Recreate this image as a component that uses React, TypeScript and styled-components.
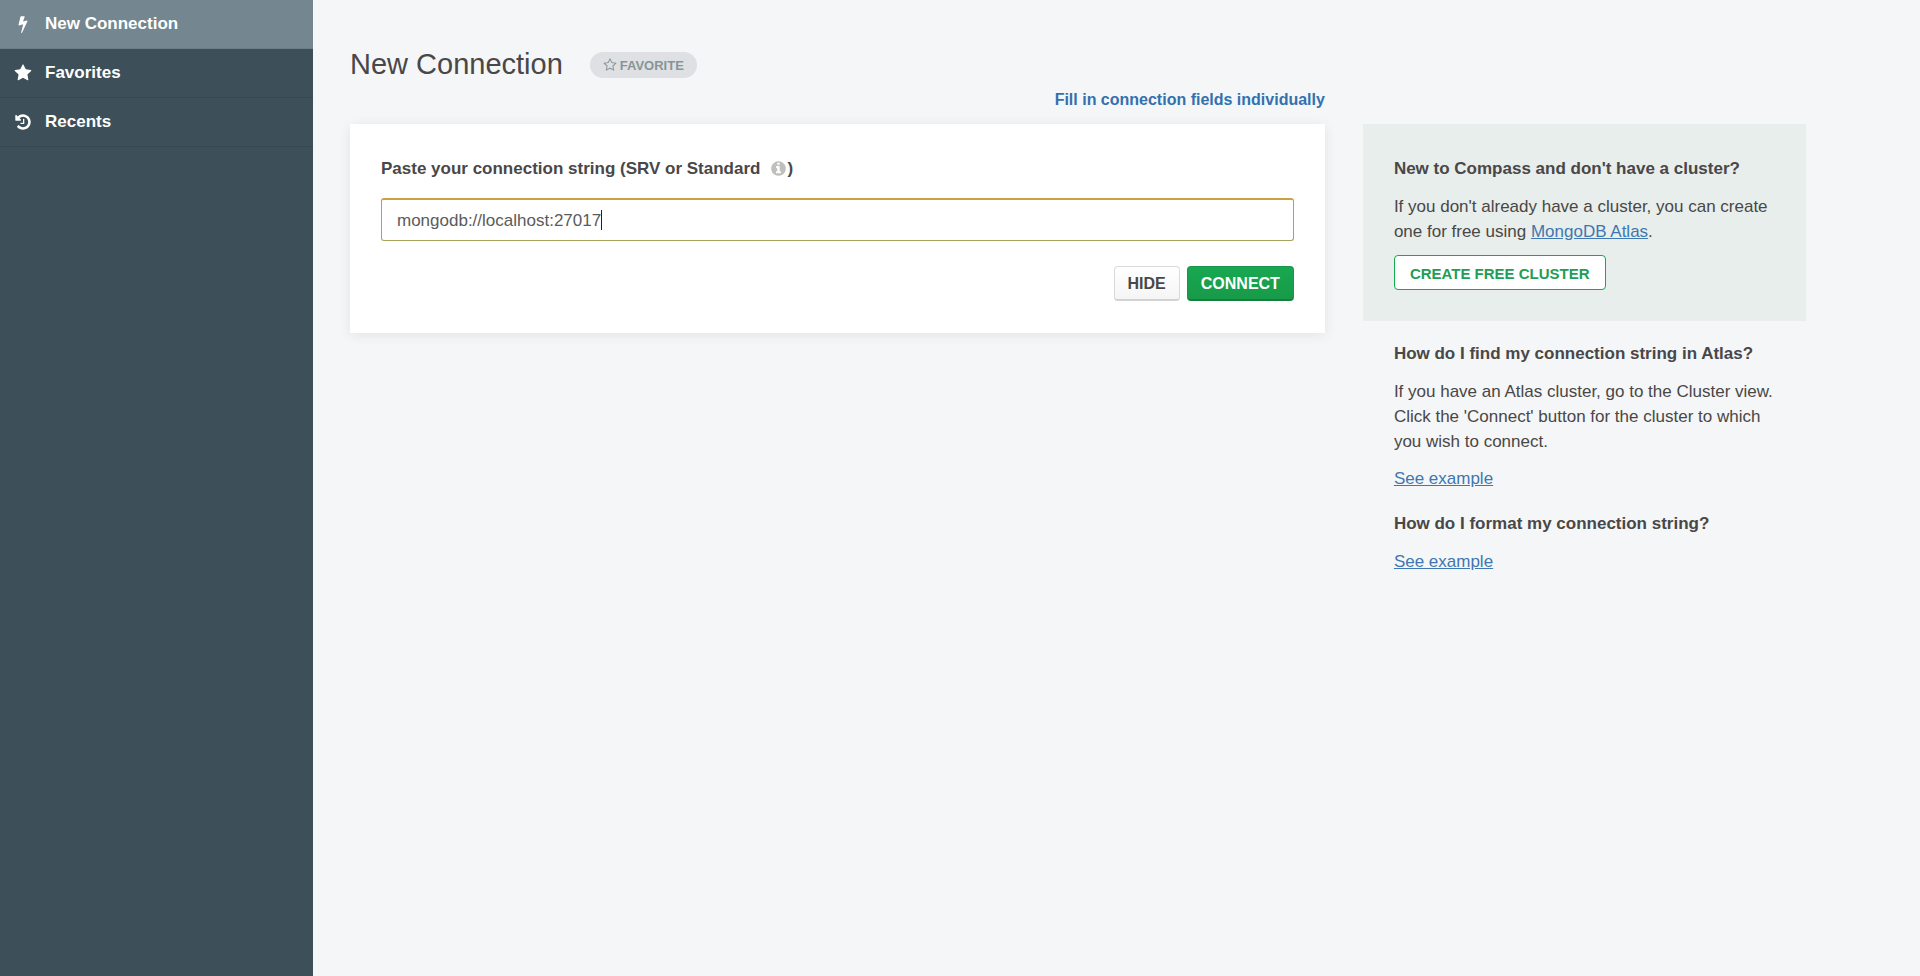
import React, { useLayoutEffect, useRef, useState } from "react";
import styled, { createGlobalStyle, css } from "styled-components";

const GlobalStyle = createGlobalStyle`
  *, *::before, *::after { box-sizing: border-box; }
  body {
    margin: 0;
    background: #f5f6f7;
    color: #494747;
    font-family: "Liberation Sans", Arial, Helvetica, sans-serif;
    font-size: 17px;
    line-height: 25px;
  }
  h1, h2, p { margin: 0; }
  button, input { font-family: inherit; }
`;

const Page = styled.div`
  display: flex;
  min-height: 100vh;
`;

const Sidebar = styled.nav`
  flex: 0 0 313px;
  background: #3d4f58;
`;

const SidebarItem = styled.button<{ $active?: boolean }>`
  display: flex;
  align-items: center;
  gap: 13px;
  width: 100%;
  height: 49px;
  padding: 0 14px;
  border: 0;
  border-bottom: 1px solid ${(p) => (p.$active ? "#6a7c85" : "#374851")};
  background: ${(p) => (p.$active ? "#74868f" : "transparent")};
  color: #fff;
  font-size: 17px;
  font-weight: 700;
  text-align: left;
  cursor: pointer;
`;

const Glyph = styled.svg<{ $size: number }>`
  flex: none;
  width: ${(p) => p.$size}px;
  height: ${(p) => p.$size}px;
  fill: currentColor;
`;

const Main = styled.main`
  flex: 1;
  min-width: 0;
  padding: 44px 114px 40px 37px;
`;

const Header = styled.header`
  display: flex;
  align-items: center;
  gap: 27px;
  height: 40px;
`;

const Title = styled.h1`
  font-size: 29px;
  font-weight: 400;
  line-height: 40px;
`;

const FavoriteButton = styled.button`
  display: flex;
  align-items: center;
  gap: 3px;
  height: 26px;
  margin-top: 2px;
  padding: 0 13px;
  border: 0;
  border-radius: 13px;
  background: #dee0e3;
  color: #889496;
  font-size: 13px;
  font-weight: 700;
  cursor: pointer;
`;

const Columns = styled.div`
  display: grid;
  grid-template-columns: minmax(0, 11fr) minmax(0, 5fr);
  column-gap: 38px;
`;

const SwitchRow = styled.div`
  grid-column: 1;
  display: flex;
  justify-content: flex-end;
  height: 40px;
  padding-top: 3px;
`;

const SwitchLink = styled.a`
  color: #3371ae;
  font-size: 16px;
  font-weight: 700;
  text-decoration: none;
`;

const Card = styled.form`
  grid-column: 1;
  align-self: start;
  padding: 32px 31px;
  background: #fff;
  box-shadow: 0 2px 12px rgba(0, 0, 0, 0.08);
`;

const Label = styled.label`
  display: flex;
  align-items: center;
  margin-bottom: 17px;
  font-weight: 700;
`;

const InfoIcon = styled(Glyph)`
  margin-left: 10px;
  color: #bfbfbe;
`;

const Field = styled.div`
  position: relative;
`;

const TextInput = styled.input`
  display: block;
  width: 100%;
  height: 43px;
  padding: 2px 15px 0;
  border: 1px solid #a9a45c;
  border-top: 2px solid #cf9f45;
  border-radius: 3px;
  outline: 0;
  background: #fff;
  color: #5b5b5b;
  font-size: 17px;
  caret-color: transparent;
`;

const Caret = styled.span`
  position: absolute;
  top: 12px;
  width: 1px;
  height: 20px;
  background: #222;
  pointer-events: none;
`;

const Actions = styled.div`
  display: flex;
  justify-content: flex-end;
  gap: 7px;
  margin-top: 25px;
`;

const buttonBase = css`
  height: 35px;
  padding: 2px 13px 0;
  border-radius: 4px;
  font-size: 16px;
  font-weight: 700;
  cursor: pointer;
`;

const HideButton = styled.button`
  ${buttonBase}
  border: 1px solid #dadada;
  border-bottom: 2px solid #d2d2d2;
  background: linear-gradient(#fff, #f5f5f5);
  color: #494747;
`;

const ConnectButton = styled.button`
  ${buttonBase}
  border: 1px solid #189748;
  border-bottom: 2px solid #14803c;
  background: linear-gradient(#18a851, #189a49);
  color: #fff;
`;

const ClusterButton = styled.button`
  ${buttonBase}
  display: block;
  margin-top: 11px;
  padding: 2px 15px 0;
  border: 1px solid #13aa52;
  background: #fff;
  color: #219e56;
  font-size: 15px;
`;

const Help = styled.aside`
  grid-column: 2;
  grid-row: 2;
`;

const HelpSection = styled.section<{ $tinted?: boolean }>`
  padding: ${(p) => (p.$tinted ? "32px 31px 31px" : "20px 31px 0")};
  background: ${(p) => (p.$tinted ? "#e8eeeb" : "transparent")};
`;

const HelpTitle = styled.h2`
  margin-bottom: 13px;
  font-size: 17px;
  font-weight: 700;
  line-height: 25px;
`;

const HelpText = styled.p<{ $spaced?: boolean }>`
  margin-bottom: ${(p) => (p.$spaced ? 12 : 0)}px;
`;

const Link = styled.a`
  color: #3f77b1;
  text-decoration: underline;
`;

const PATHS = {
  bolt: "M1333 566q18 20 7 44l-540 1157q-13 25-42 25-4 0-14-2-17-5-25.5-19t-4.5-30l197-808-406 101q-4 1-12 1-18 0-31-11-18-15-13-39l201-825q4-14 16-23t28-9h328q19 0 32 12.5t13 29.5q0 8-5 18l-171 463 396-98q8-2 12-2 19 0 34 15z",
  star: "M1728 647q0 22-26 48l-363 354 86 500q1 7 1 20 0 21-10.5 35.5t-30.5 14.5q-19 0-40-12l-449-236-449 236q-22 12-40 12-21 0-31.5-14.5t-10.5-35.5q0-6 2-20l86-500-364-354q-25-27-25-48 0-37 56-46l502-73 225-455q19-41 49-41t49 41l225 455 502 73q56 9 56 46z",
  starOutline:
    "M1201 1004l306-297-422-62-189-382-189 382-422 62 306 297-73 421 378-199 377 199zm527-357q0 22-26 48l-363 354 86 500q1 7 1 20 0 50-41 50-19 0-40-12l-449-236-449 236q-22 12-40 12-21 0-31.5-14.5t-10.5-35.5q0-6 2-20l86-500-364-354q-25-27-25-48 0-37 56-46l502-73 225-455q19-41 49-41t49 41l225 455 502 73q56 9 56 46z",
  history:
    "M1664 896q0 156-61 298t-164 245-245 164-298 61q-172 0-327-72.5t-264-204.5q-7-10-6.5-22.5t8.5-20.5l137-138q10-9 25-9 16 2 23 12 73 95 179 147t225 52q104 0 198.5-40.5t163.5-109.5 109.5-163.5 40.5-198.5-40.5-198.5-109.5-163.5-163.5-109.5-198.5-40.5q-98 0-188 35.5t-160 101.5l137 138q31 30 14 69-17 40-59 40h-448q-26 0-45-19t-19-45v-448q0-42 40-59 39-17 69 14l130 129q107-101 244.5-156.5t284.5-55.5q156 0 298 61t245 164 164 245 61 298zm-640-288v448q0 14-9 23t-23 9h-320q-14 0-23-9t-9-23v-64q0-14 9-23t23-9h224v-352q0-14 9-23t23-9h64q14 0 23 9t9 23z",
  info: "M1152 1376v-160q0-14-9-23t-23-9h-96v-512q0-14-9-23t-23-9h-320q-14 0-23 9t-9 23v160q0 14 9 23t23 9h96v320h-96q-14 0-23 9t-9 23v160q0 14 9 23t23 9h448q14 0 23-9t9-23zm-128-896v-160q0-14-9-23t-23-9h-192q-14 0-23 9t-9 23v160q0 14 9 23t23 9h192q14 0 23-9t9-23zm640 416q0 209-103 385.5t-279.5 279.5-385.5 103-385.5-103-279.5-279.5-103-385.5 103-385.5 279.5-279.5 385.5-103 385.5 103 279.5 279.5 103 385.5z",
};

function Icon({ name, size }: { name: keyof typeof PATHS; size: number }) {
  return (
    <Glyph $size={size} viewBox="0 0 1792 1792" aria-hidden="true">
      <path d={PATHS[name]} />
    </Glyph>
  );
}

function ConnectionInput() {
  const ref = useRef<HTMLInputElement>(null);
  const [value, setValue] = useState("mongodb://localhost:27017");
  const [caretLeft, setCaretLeft] = useState(0);

  // The caret sits right after the last typed character.
  useLayoutEffect(() => {
    const input = ref.current;
    const context = document.createElement("canvas").getContext("2d");
    if (!input || !context) return;
    const style = getComputedStyle(input);
    context.font = `${style.fontSize} ${style.fontFamily}`;
    setCaretLeft(16 + Math.round(context.measureText(value).width));
  }, [value]);

  return (
    <Field>
      <TextInput
        id="connection-string"
        ref={ref}
        type="text"
        value={value}
        onChange={(e) => setValue(e.target.value)}
      />
      <Caret style={{ left: caretLeft }} />
    </Field>
  );
}

export default function App() {
  return (
    <>
      <GlobalStyle />
      <Page>
        <Sidebar aria-label="Connections">
          <SidebarItem type="button" $active>
            <Icon name="bolt" size={18} />
            New Connection
          </SidebarItem>
          <SidebarItem type="button">
            <Icon name="star" size={18} />
            Favorites
          </SidebarItem>
          <SidebarItem type="button">
            <Icon name="history" size={18} />
            Recents
          </SidebarItem>
        </Sidebar>
        <Main>
          <Header>
            <Title>New Connection</Title>
            <FavoriteButton type="button">
              <Icon name="starOutline" size={14} />
              FAVORITE
            </FavoriteButton>
          </Header>
          <Columns>
            <SwitchRow>
              <SwitchLink href="#fields">Fill in connection fields individually</SwitchLink>
            </SwitchRow>
            <Card onSubmit={(e) => e.preventDefault()}>
              <Label htmlFor="connection-string">
                Paste your connection string (SRV or Standard
                <InfoIcon $size={17} viewBox="0 0 1792 1792" aria-hidden="true">
                  <path d={PATHS.info} />
                </InfoIcon>
                )
              </Label>
              <ConnectionInput />
              <Actions>
                <HideButton type="button">HIDE</HideButton>
                <ConnectButton type="submit">CONNECT</ConnectButton>
              </Actions>
            </Card>
            <Help>
              <HelpSection $tinted>
                <HelpTitle>New to Compass and don't have a cluster?</HelpTitle>
                <HelpText>
                  If you don't already have a cluster, you can create one for free using{" "}
                  <Link href="#atlas">MongoDB Atlas</Link>.
                </HelpText>
                <ClusterButton type="button">CREATE FREE CLUSTER</ClusterButton>
              </HelpSection>
              <HelpSection>
                <HelpTitle>How do I find my connection string in Atlas?</HelpTitle>
                <HelpText $spaced>
                  If you have an Atlas cluster, go to the Cluster view. Click the 'Connect' button
                  for the cluster to which you wish to connect.
                </HelpText>
                <Link href="#find-example">See example</Link>
              </HelpSection>
              <HelpSection>
                <HelpTitle>How do I format my connection string?</HelpTitle>
                <Link href="#format-example">See example</Link>
              </HelpSection>
            </Help>
          </Columns>
        </Main>
      </Page>
    </>
  );
}
